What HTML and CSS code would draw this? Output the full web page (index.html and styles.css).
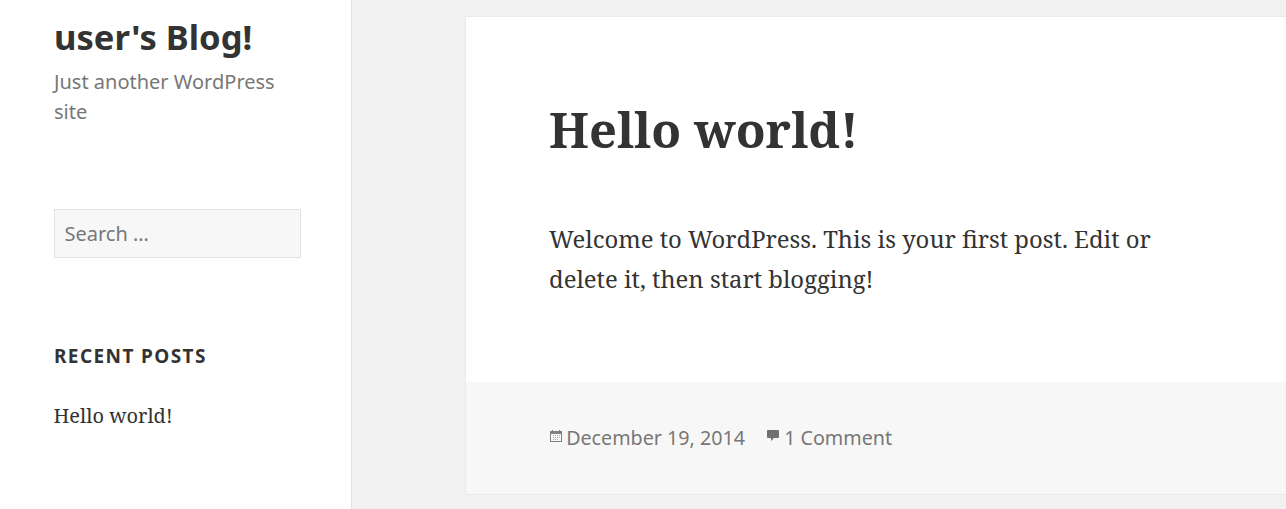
FILE: index.html
```html
<!DOCTYPE html>
<html lang="en">
<head>
    <meta charset="UTF-8">
    <meta name="viewport" content="width=device-width, initial-scale=1.0">
    <title>user's Blog!</title>
    <link rel="stylesheet" href="styles.css">
</head>
<body>
    <div class="page">
        <aside class="sidebar">
            <h1 class="site-title">user's Blog!</h1>
            <p class="site-description">Just another WordPress site</p>
            <div class="search-box">Search <span class="search-dots">…</span></div>
            <h2 class="widget-title">RECENT POSTS</h2>
            <a class="widget-link" href="#">Hello world!</a>
        </aside>
        <main class="content">
            <article class="post">
                <div class="post-body">
                    <h2 class="post-title">Hello world!</h2>
                    <p class="post-text">Welcome to WordPress. This is your first post. Edit or delete it, then start blogging!</p>
                </div>
                <footer class="post-footer">
                    <span class="meta">
                        <svg class="meta-icon" width="12" height="12" viewBox="0 0 12 12"><path fill="#808080" fill-rule="evenodd" d="M2 0h1v1h6V0h1v1h2v11H0V1h2zM1 4v7h10V4z"/><path fill="#a8a8a8" d="M3 5h1v1H3zM5 5h1v1H5zM7 5h1v1H7zM9 5h1v1H9zM3 7h1v1H3zM5 7h1v1H5zM7 7h1v1H7zM9 7h1v1H9zM3 9h1v1H3zM5 9h1v1H5zM7 9h1v1H7z"/></svg>
                        <span>December 19, 2014</span>
                    </span>
                    <span class="meta">
                        <svg class="meta-icon" width="14" height="12" viewBox="0 0 14 12"><path fill="#707070" d="M2 0h10a1 1 0 0 1 1 1v6a1 1 0 0 1-1 1H8l-3 3V8H2a1 1 0 0 1-1-1V1a1 1 0 0 1 1-1z"/></svg>
                        <span>1 Comment</span>
                    </span>
                </footer>
            </article>
        </main>
    </div>
</body>
</html>
```

FILE: styles.css
```css
html, body {
    margin: 0;
    padding: 0;
    height: 100%;
    overflow: hidden;
}
body {
    background-color: #f1f1f1;
    color: #333;
    font-family: "Noto Sans", sans-serif;
}
.page {
    display: flex;
    height: 509px;
}
.sidebar {
    box-sizing: border-box;
    width: 352px;
    padding: 14px 50px 0 54px;
    background: #fff;
    border-right: 1px solid #e3e3e3;
}
.site-title {
    margin: 0;
    font-size: 34.6px;
    line-height: 46px;
    font-weight: 700;
}
.site-description {
    margin: 7px 0 0;
    font-size: 20px;
    line-height: 30px;
    color: #777;
}
.search-box {
    box-sizing: border-box;
    height: 49px;
    margin-top: 82px;
    padding: 0 9.5px;
    background: #f7f7f7;
    border: 1px solid #e3e3e3;
    font-size: 20px;
    line-height: 47px;
    color: #777;
}
.search-dots {
    letter-spacing: 2px;
}
.widget-title {
    margin: 85px 0 0;
    font-size: 19px;
    line-height: 26px;
    font-weight: 700;
    letter-spacing: 1.4px;
}
.widget-link {
    display: block;
    margin-top: 32px;
    margin-left: -0.5px;
    font-family: "Noto Serif", "DejaVu Serif", serif;
    font-size: 20px;
    line-height: 30px;
    color: #333;
    text-decoration: none;
}
.content {
    flex: 1;
    padding: 16px 0 0 113px;
}
.post {
    background: #fff;
    border: 1px solid #eaeaea;
    border-right: 0;
    height: 477px;
    display: flex;
    flex-direction: column;
}
.post-body {
    height: 365px;
    padding: 0 120px 0 83px;
}
.post-title {
    margin: 0;
    padding-top: 79px;
    font-family: "Noto Serif", "DejaVu Serif", serif;
    font-size: 48.8px;
    line-height: 66px;
    font-weight: 700;
}
.post-text {
    margin: 57px 0 0;
    font-family: "Noto Serif", "DejaVu Serif", serif;
    font-size: 23.85px;
    line-height: 40px;
}
.post-footer {
    flex: 1;
    padding: 41px 84px 0;
    background: #f7f7f7;
    display: flex;
    gap: 21px;
    font-size: 19.7px;
    line-height: 30px;
    color: #777;
}
.meta-icon {
    margin-right: -1px;
    vertical-align: 3px;
}
```
